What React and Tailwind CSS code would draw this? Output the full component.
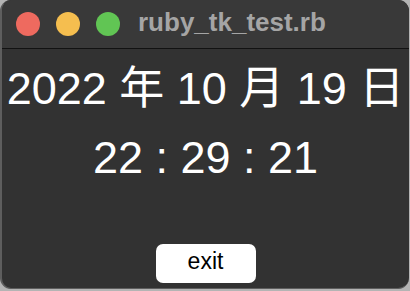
export default function App() {
  return (
    <div className="w-[410px] h-[291px] bg-[#b4b4b4] overflow-hidden" style={{ fontFamily: '"Liberation Sans", "Noto Sans CJK JP", sans-serif' }}>
      <div className="w-[409px] h-[289px] rounded-[11px] bg-[#323232] border-l-2 border-b border-[#5e5e5e] flex flex-col overflow-hidden">
        <div className="h-[49px] bg-[#393939] border-b border-[#121212] flex items-center pl-[14px] shrink-0">
          <div className="w-6 h-6 rounded-full bg-[#ee6a5f]" />
          <div className="w-6 h-6 rounded-full bg-[#f5be4f] ml-4" />
          <div className="w-6 h-6 rounded-full bg-[#61c554] ml-4" />
          <div className="ml-[18px] text-[26px] font-bold text-[#a5a5a5] leading-none -mt-1">ruby_tk_test.rb</div>
        </div>
        <div className="flex-1 flex flex-col items-center text-white">
          <div className="mt-[15px] text-[45px] leading-[50px] whitespace-nowrap">2022 年 10 月 19 日</div>
          <div className="mt-[19px] text-[45px] leading-[50px] whitespace-nowrap">22 : 29 : 21</div>
          <button className="mt-auto mb-[5px] w-[100px] h-[39px] bg-white rounded-[7px] text-black text-[23px] leading-none pb-1">exit</button>
        </div>
      </div>
    </div>
  );
}
